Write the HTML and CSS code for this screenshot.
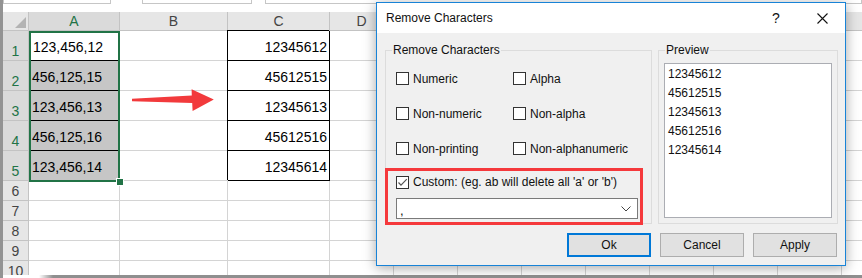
FILE: index.html
```html
<!DOCTYPE html>
<html lang="en">

<head>
    <meta charset="UTF-8">
    <title>Remove Characters</title>
    <link rel="stylesheet" href="styles.css">
</head>

<body>
    <div class="app">
        <div class="formula-strip">
            <span class="fbox fbox-name"></span>
            <span class="fbox fbox-mid"></span>
            <span class="fbox fbox-wide"></span>
        </div>

        <div class="sheet">
            <!-- header row -->
            <div class="hd corner"><span class="tri"></span></div>
            <div class="hd sel">A</div>
            <div class="hd">B</div>
            <div class="hd">C</div>
            <div class="hd">D</div>
            <div class="hd rest"></div>

            <div class="rh sel">1</div>
            <div class="cell cell-a active">123,456,12</div>
            <div class="cell"></div>
            <div class="cell num boxed">12345612</div>
            <div class="cell"></div>
            <div class="cell rest"></div>

            <div class="rh sel">2</div>
            <div class="cell cell-a">456,125,15</div>
            <div class="cell"></div>
            <div class="cell num boxed">45612515</div>
            <div class="cell"></div>
            <div class="cell rest"></div>

            <div class="rh sel">3</div>
            <div class="cell cell-a">123,456,13</div>
            <div class="cell"></div>
            <div class="cell num boxed">12345613</div>
            <div class="cell"></div>
            <div class="cell rest"></div>

            <div class="rh sel">4</div>
            <div class="cell cell-a">456,125,16</div>
            <div class="cell"></div>
            <div class="cell num boxed">45612516</div>
            <div class="cell"></div>
            <div class="cell rest"></div>

            <div class="rh sel">5</div>
            <div class="cell cell-a last">123,456,14</div>
            <div class="cell"></div>
            <div class="cell num boxed">12345614</div>
            <div class="cell"></div>
            <div class="cell rest"></div>

            <div class="rh">6</div>
            <div class="cell"></div>
            <div class="cell"></div>
            <div class="cell"></div>
            <div class="cell"></div>
            <div class="cell rest"></div>

            <div class="rh">7</div>
            <div class="cell"></div>
            <div class="cell"></div>
            <div class="cell"></div>
            <div class="cell"></div>
            <div class="cell rest"></div>

            <div class="rh">8</div>
            <div class="cell"></div>
            <div class="cell"></div>
            <div class="cell"></div>
            <div class="cell"></div>
            <div class="cell rest"></div>

            <div class="rh">9</div>
            <div class="cell"></div>
            <div class="cell"></div>
            <div class="cell"></div>
            <div class="cell"></div>
            <div class="cell rest"></div>

            <div class="rh">10</div>
            <div class="cell"></div>
            <div class="cell"></div>
            <div class="cell"></div>
            <div class="cell"></div>
            <div class="cell rest"></div>

            <!-- overlays -->
            <div class="selection"></div>
            <div class="fill-handle"></div>
            <svg class="arrow" width="86" height="26" viewBox="0 0 86 26">
                <polygon points="2,11.8 61.8,8.6 61.6,2.2 83.8,12.4 62.6,24 62.2,16 2,14.2" fill="#f23a3c" />
            </svg>
        </div>
        <div class="bottom-edge"></div>

        <div class="dialog">
            <div class="titlebar">
                <span class="title">Remove Characters</span>
                <span class="tb-btn">?</span>
                <span class="tb-btn">
                    <svg width="11" height="11" viewBox="0 0 11 11">
                        <path d="M0.5 0.5 L10.5 10.5 M10.5 0.5 L0.5 10.5" stroke="#111" stroke-width="1.1" fill="none" />
                    </svg>
                </span>
            </div>

            <div class="dialog-body">
                <div class="groups">
                    <fieldset class="group group-remove">
                        <legend>Remove Characters</legend>
                        <div class="opts">
                            <label class="opt"><span class="box"></span>Numeric</label>
                            <label class="opt"><span class="box"></span>Alpha</label>
                            <label class="opt"><span class="box"></span>Non-numeric</label>
                            <label class="opt"><span class="box"></span>Non-alpha</label>
                            <label class="opt"><span class="box"></span>Non-printing</label>
                            <label class="opt"><span class="box"></span>Non-alphanumeric</label>
                        </div>
                        <div class="custom">
                            <label class="opt">
                                <span class="box">
                                    <svg width="11" height="11" viewBox="0 0 11 11">
                                        <polyline points="1.5,5.5 4,8.2 9.8,2.2" stroke="#555" stroke-width="1.2" fill="none" />
                                    </svg>
                                </span>Custom: (eg. ab will delete all 'a' or 'b')
                            </label>
                            <div class="combo">
                                <span class="combo-text">,</span>
                                <svg width="10" height="6" viewBox="0 0 10 6">
                                    <polyline points="0.5,0.5 5,5 9.5,0.5" stroke="#444" stroke-width="1" fill="none" />
                                </svg>
                            </div>
                        </div>
                    </fieldset>

                    <fieldset class="group group-preview">
                        <legend>Preview</legend>
                        <div class="listbox">
                            <div>12345612</div>
                            <div>45612515</div>
                            <div>12345613</div>
                            <div>45612516</div>
                            <div>12345614</div>
                        </div>
                    </fieldset>
                </div>

                <div class="actions">
                    <button class="btn btn-default">Ok</button>
                    <button class="btn">Cancel</button>
                    <button class="btn">Apply</button>
                </div>
            </div>
        </div>
    </div>
</body>

</html>
```

FILE: styles.css
```css
body {
    margin: 0;
    background: #fff;
    font-family: "Liberation Sans", Arial, sans-serif;
}

.app {
    position: relative;
    width: 862px;
    height: 278px;
    overflow: hidden;
    box-sizing: border-box;
    border-left: 3px solid #939393;
}

/* formula bar remains at the top */
.formula-strip {
    height: 12px;
    display: flex;
    gap: 31px;
}

.fbox {
    height: 3px;
    border: 1px solid #c6c6c6;
    border-top: none;
    background: #fff;
}

.fbox-name {
    width: 106px;
}

.fbox-mid {
    width: 108px;
    margin-left: 0;
}

.fbox-wide {
    flex: 1;
    margin-left: -18px;
}

/* spreadsheet */
.sheet {
    position: relative;
    display: grid;
    grid-template-columns: 26px 91px 108px 102px 64px 1fr;
    grid-template-rows: 19px repeat(5, 30px) repeat(5, 20px);
    height: 263px;
    overflow: hidden;
    font-size: 14px;
    color: #000;
}

.sheet > div {
    border-right: 1px solid #d4d4d4;
    border-bottom: 1px solid #d4d4d4;
}

.hd,
.rh {
    background: #e6e6e6;
    color: #444;
    display: flex;
    justify-content: center;
    line-height: 18px;
}

.sheet > .hd,
.sheet > .rh {
    border-color: #c3c3c3;
}

.hd {
    align-items: center;
}

.rh {
    align-items: flex-end;
}

.hd.sel,
.rh.sel {
    background: #dadada;
    color: #217346;
}

.corner {
    justify-content: flex-end;
    align-items: flex-end;
    padding: 0 2px 2px 0;
}

.tri {
    width: 0;
    height: 0;
    border-left: 11px solid transparent;
    border-bottom: 11px solid #b3b3b3;
}

.cell {
    display: flex;
    align-items: center;
    padding: 2px 4px 0;
    line-height: 18px;
}

.cell-a {
    background: #c6c6c6;
    padding-left: 3px;
}

.cell-a.active {
    background: #fff;
    padding-left: 4px;
}

.sheet > .cell-a {
    border-bottom-color: #000;
}

.sheet > .cell-a.last {
    border-bottom-color: #d4d4d4;
}

.num {
    justify-content: flex-end;
    padding-right: 2px;
}

.sheet > .boxed {
    border-right-color: #000;
    border-bottom-color: #000;
    box-shadow: -1px -1px 0 #000;
}

.sheet > .rest {
    border-right: none;
    background: repeating-linear-gradient(to right, transparent 0 63px, #d4d4d4 63px 64px);
}

.sheet > .hd.rest {
    background: #e6e6e6 repeating-linear-gradient(to right, transparent 0 63px, #c3c3c3 63px 64px);
}

.selection {
    position: absolute;
    left: 26px;
    top: 19px;
    width: 91px;
    height: 151px;
    box-sizing: border-box;
    border: 2px solid #217346 !important;
}

.fill-handle {
    position: absolute;
    left: 114px;
    top: 167px;
    width: 6px;
    height: 6px;
    background: #217346;
    border: none !important;
    outline: 1px solid #fff;
}

.arrow {
    position: absolute;
    left: 127px;
    top: 75px;
}

.bottom-edge {
    height: 3px;
    background: linear-gradient(to right, #fff 36px, #8f8f8f 50px);
}

/* dialog */
.dialog {
    position: absolute;
    left: 373px;
    top: 2px;
    width: 470px;
    height: 264px;
    box-sizing: border-box;
    border: 1px solid #1883d7;
    background: #f0f0f0;
    box-shadow: 0 2px 12px rgba(0, 0, 0, 0.35);
    font-size: 12px;
    color: #111;
    display: flex;
    flex-direction: column;
}

.titlebar {
    height: 30px;
    background: #fff;
    display: flex;
    align-items: center;
    padding-left: 9px;
}

.title {
    flex: 1;
}

.tb-btn {
    width: 46px;
    display: flex;
    justify-content: center;
    font-size: 14px;
}

.dialog-body {
    padding: 10px 7px 8px 8px;
}

.groups {
    display: flex;
    gap: 6px;
}

.group {
    margin: 0;
    padding: 0;
    border: 1px solid #dcdcdc;
    min-width: 0;
}

.group legend {
    margin-left: 6px;
    padding: 0 1px;
    line-height: 14px;
}

.group-remove {
    width: 267px;
    box-sizing: border-box;
}

.group-preview {
    width: 180px;
    box-sizing: border-box;
}

.opts {
    display: grid;
    grid-template-columns: 117px 1fr;
    grid-auto-rows: 35px;
    padding: 4px 0 0 10px;
}

.opt {
    display: flex;
    align-items: center;
    gap: 4px;
}

.box {
    width: 13px;
    height: 13px;
    box-sizing: border-box;
    border: 1px solid #333;
    background: #fff;
    display: flex;
    align-items: center;
    justify-content: center;
}

.custom {
    width: 258px;
    box-sizing: border-box;
    margin: 2px 0 -2px -1px;
    border: 3px solid #f5393c;
    padding: 0 2px 3px 8px;
}

.custom .opt {
    height: 22px;
}

.combo {
    margin-top: 5px;
    height: 21px;
    box-sizing: border-box;
    border: 1px solid #7a7a7a;
    background: #fff;
    display: flex;
    align-items: center;
    justify-content: space-between;
    padding: 0 6px 0 3px;
}

.combo-text {
    font-size: 13px;
    margin-top: 4px;
}

.listbox {
    height: 155px;
    margin: 6px 5px 5px;
    box-sizing: border-box;
    border: 1px solid #abadb3;
    background: #fff;
    padding: 1px 3px;
    line-height: 19px;
}

.actions {
    display: flex;
    justify-content: flex-end;
    gap: 9px;
    margin-top: 9px;
    padding-right: 1px;
}

.btn {
    width: 84px;
    height: 24px;
    box-sizing: border-box;
    border: 1px solid #adadad;
    background: #e1e1e1;
    font-family: "Liberation Sans", Arial, sans-serif;
    font-size: 12px;
    color: #111;
    padding: 0;
}

.btn-default {
    border: 2px solid #0078d7;
}
```
